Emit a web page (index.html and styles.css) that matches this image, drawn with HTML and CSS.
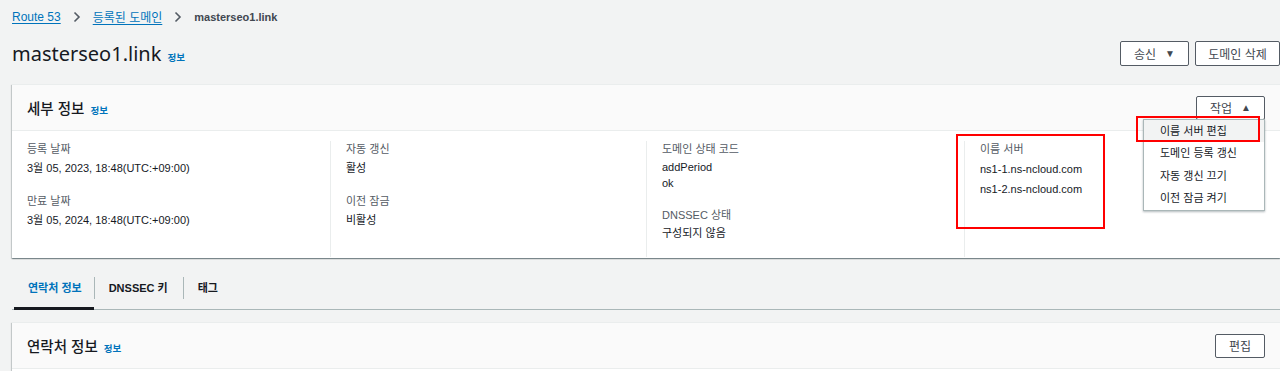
FILE: index.html
```html
<!DOCTYPE html>
<html lang="ko">
<head>
<meta charset="utf-8">
<link rel="stylesheet" href="styles.css">
</head>
<body>
<div class="page">
  <nav class="crumbs">
    <a class="crumb-link">Route 53</a>
    <svg class="chev" width="8" height="12" viewBox="0 0 8 12"><path d="M1.5 1.5 L6 6 L1.5 10.5" fill="none" stroke="#545b64" stroke-width="1.6"/></svg>
    <a class="crumb-link">등록된 도메인</a>
    <svg class="chev" width="8" height="12" viewBox="0 0 8 12"><path d="M1.5 1.5 L6 6 L1.5 10.5" fill="none" stroke="#545b64" stroke-width="1.6"/></svg>
    <span class="crumb-cur">masterseo1.link</span>
  </nav>

  <header class="page-head">
    <h1 class="title">masterseo1.link <span class="info">정보</span></h1>
    <div class="actions">
      <button class="btn">송신 <span class="caret">▼</span></button>
      <button class="btn btn-wide">도메인 삭제</button>
    </div>
  </header>

  <section class="panel details">
    <div class="panel-head">
      <h2 class="panel-title">세부 정보 <span class="info">정보</span></h2>
      <div class="dd">
        <button class="btn btn-small">작업 <span class="caret">▲</span></button>
        <ul class="menu">
          <li class="menu-item active">이름 서버 편집</li>
          <li class="menu-item">도메인 등록 갱신</li>
          <li class="menu-item">자동 갱신 끄기</li>
          <li class="menu-item">이전 잠금 켜기</li>
        </ul>
        <div class="mark mark-item"></div>
      </div>
    </div>
    <div class="panel-body cols">
      <div class="col">
        <div class="field">
          <div class="label">등록 날짜</div>
          <div class="value">3월 05, 2023, 18:48(UTC:+09:00)</div>
        </div>
        <div class="field">
          <div class="label">만료 날짜</div>
          <div class="value">3월 05, 2024, 18:48(UTC:+09:00)</div>
        </div>
      </div>
      <div class="col">
        <div class="field">
          <div class="label">자동 갱신</div>
          <div class="value">활성</div>
        </div>
        <div class="field">
          <div class="label">이전 잠금</div>
          <div class="value">비활성</div>
        </div>
      </div>
      <div class="col">
        <div class="field">
          <div class="label">도메인 상태 코드</div>
          <div class="value tight">addPeriod</div>
          <div class="value tight">ok</div>
        </div>
        <div class="field">
          <div class="label">DNSSEC 상태</div>
          <div class="value tight">구성되지 않음</div>
        </div>
      </div>
      <div class="col col-ns">
        <div class="field">
          <div class="label">이름 서버</div>
          <div class="value ns">ns1-1.ns-ncloud.com</div>
          <div class="value ns">ns1-2.ns-ncloud.com</div>
        </div>
        <div class="mark mark-ns"></div>
      </div>
    </div>
  </section>

  <nav class="tabs">
    <div class="tab active">연락처 정보</div>
    <div class="tab">DNSSEC 키</div>
    <div class="tab">태그</div>
  </nav>

  <section class="panel contact">
    <div class="panel-head">
      <h2 class="panel-title">연락처 정보 <span class="info">정보</span></h2>
      <button class="btn btn-small btn-edit">편집</button>
    </div>
  </section>
</div>
</body>
</html>
```

FILE: styles.css
```css
* { box-sizing: border-box; }
html, body { margin: 0; padding: 0; }
body {
  background: #f2f3f3;
  font-family: "Liberation Sans", "Noto Sans CJK KR", sans-serif;
  color: #16191f;
  width: 1280px;
  height: 371px;
  overflow: hidden;
}
.page { padding: 0 0 0 12px; }

.crumbs {
  display: flex;
  align-items: center;
  gap: 9px;
  height: 32px;
  padding-top: 1px;
  font-size: 12px;
}
.crumb-link { color: #0073bb; text-decoration: underline; text-underline-offset: 2px; }
.crumb-cur { color: #414750; font-size: 11px; font-weight: 700; }
.chev { display: block; margin: 0 3px; }

.page-head {
  display: flex;
  justify-content: space-between;
  align-items: center;
  height: 42px;
  margin-bottom: 10px;
}
.title {
  margin: 0;
  font-family: "Noto Sans", "Noto Sans CJK KR", sans-serif;
  font-size: 20px;
  font-weight: 400;
  display: flex;
  align-items: baseline;
  gap: 6px;
}
.info { color: #0073bb; font-size: 9.5px; font-weight: 700; font-family: "Noto Sans CJK KR", sans-serif; }
.actions { display: flex; gap: 6px; }

.btn {
  font-family: "Liberation Sans", "Noto Sans CJK KR", sans-serif;
  background: #fff;
  border: 1px solid #545b64;
  border-radius: 2px;
  color: #414750;
  font-size: 12px;
  font-weight: 400;
  height: 25px;
  padding: 0 13px;
  display: inline-flex;
  align-items: center;
  gap: 9px;
  white-space: nowrap;
  cursor: pointer;
}
.btn-wide { width: 85px; justify-content: center; }
.caret { font-size: 10px; color: #414750; }
.btn-small { height: 24px; padding: 0 13px; }

.panel {
  background: #fff;
  box-shadow: 0 1px 1px 0 rgba(0,28,36,.3), 1px 1px 1px 0 rgba(0,28,36,.15), -1px 1px 1px 0 rgba(0,28,36,.15);
  border-top: 1px solid #eaeded;
}
.details { height: 174px; }
.panel-head {
  background: #fafafa;
  border-bottom: 1px solid #eaeded;
  height: 46px;
  display: flex;
  justify-content: space-between;
  align-items: center;
  padding: 0 15px;
}
.panel-title {
  margin: 0;
  font-family: "Noto Sans CJK KR", sans-serif;
  font-size: 14.5px;
  font-weight: 500;
  display: flex;
  align-items: baseline;
  gap: 6px;
}
.dd { position: relative; }
.menu {
  position: absolute;
  right: 0;
  top: 23px;
  width: 122px;
  margin: 0;
  padding: 0;
  list-style: none;
  background: #fff;
  border: 1px solid #aab7b8;
  box-shadow: 0 1px 2px rgba(0,28,36,.3);
  z-index: 5;
}
.menu-item {
  font-size: 11px;
  color: #16191f;
  height: 22.5px;
  line-height: 22.5px;
  padding-left: 16px;
}
.menu-item.active { background: #f2f3f3; }
.mark {
  position: absolute;
  border: 2.5px solid #f00;
  z-index: 6;
  pointer-events: none;
}
.mark-item { right: 5px; top: 20px; width: 124px; height: 26px; }

.cols {
  display: grid;
  grid-template-columns: 318px 316px 318px 1fr;
  padding: 10px 0 14px;
  height: 127px;
}
.col {
  padding-left: 15px;
  border-left: 1px solid #eaeded;
}
.col:first-child { border-left: none; }
.col-ns { position: relative; }
.field { margin-bottom: 16px; }
.label { font-size: 11px; color: #545b64; line-height: 16px; height: 16px; margin-bottom: 2px; }
.value { font-size: 11px; color: #16191f; line-height: 18px; }
.value.tight { line-height: 16px; }
.value.ns { line-height: 20px; }
.mark-ns { left: -9px; top: -7px; width: 149px; height: 95px; }

.tabs {
  display: flex;
  align-items: center;
  margin-top: 6px;
  height: 46px;
  border-bottom: 1px solid #aab7b8;
  padding-left: 2px;
}
.tab {
  font-family: "Liberation Sans", "Noto Sans CJK KR", sans-serif;
  font-size: 11px;
  font-weight: 700;
  color: #16191f;
  padding: 0 15px;
  height: 100%;
  display: flex;
  align-items: center;
  position: relative;
}
.tab + .tab::before {
  content: "";
  position: absolute;
  left: 0;
  top: 13px;
  height: 22px;
  border-left: 1px solid #aab7b8;
}
.tab.active { color: #0073bb; border-bottom: 3px solid #16191f; padding: 3px 12px 0 14px; margin-bottom: -1px; height: calc(100% + 1px); }

.contact { margin-top: 12px; height: 60px; }
```
